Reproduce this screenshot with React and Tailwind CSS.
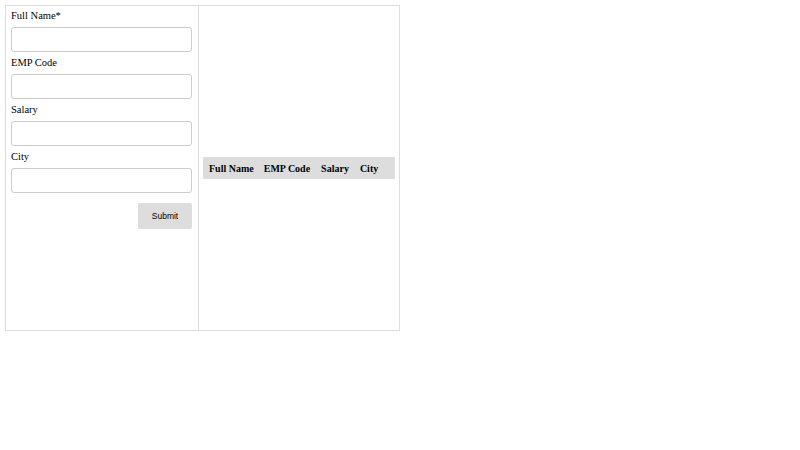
export default function App() {
  const fields = ["Full Name*", "EMP Code", "Salary", "City"];
  return (
    <div className="w-[800px] h-[450px] bg-white" style={{ fontFamily: '"Liberation Serif", "Times New Roman", serif' }}>
      <div className="ml-[5px] mt-[5px] inline-flex w-[395px] h-[326px] border border-[#dddddd] text-black">
        <div className="w-[193px] shrink-0 border-r border-[#dddddd] pl-[5px] pr-[6px] pt-[4px] flex flex-col">
          {fields.map((f) => (
            <div key={f} className="flex flex-col">
              <label className="text-[10.5px] leading-[12px] h-[12px]">{f}</label>
              <input className="mt-[5px] mb-[5px] h-[25px] w-full rounded-[3px] border border-[#cccccc] bg-white outline-none" />
            </div>
          ))}
          <div className="flex justify-end mt-[5px]">
            <button
              className="w-[54px] h-[26px] rounded-[2px] bg-[#dddddd] text-[8.5px] text-black"
              style={{ fontFamily: '"Liberation Sans", Arial, sans-serif' }}
            >
              Submit
            </button>
          </div>
        </div>
        <div className="flex-1 flex items-center pl-[4px] pr-[4px]">
          <div className="flex w-full h-[22px] items-center bg-[#dddddd] text-[10px] font-bold">
            <div className="pl-[6px] pr-[5px]">Full Name</div>
            <div className="px-[5px]">EMP Code</div>
            <div className="pl-[6px] pr-[6px]">Salary</div>
            <div className="px-[5px]">City</div>
          </div>
        </div>
      </div>
    </div>
  );
}
